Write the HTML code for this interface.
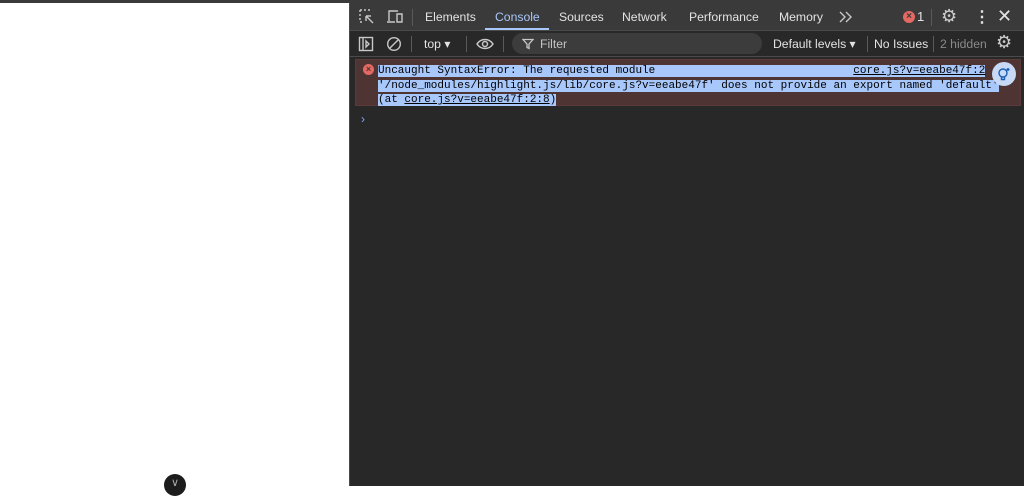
<!DOCTYPE html>
<html><head><style>
*{margin:0;padding:0;box-sizing:border-box}
body{width:1024px;height:486px;overflow:hidden;background:#fff;font-family:"Liberation Sans",sans-serif;position:relative}
.top{position:absolute;left:0;top:0;width:1024px;height:3px;background:#3a3a3a}
.dt{position:absolute;left:349px;top:3px;width:675px;height:483px;background:#282828;border-left:1px solid #4a4a4a}
.r1{position:absolute;left:0;top:0;width:675px;height:28px;background:#3a3a3a;border-bottom:1px solid #4a4a4a;color:#e3e3e3;font-size:12.2px}
.r2{position:absolute;left:0;top:28px;width:675px;height:26px;background:#282828;border-bottom:1px solid #4a4a4a;color:#e3e3e3;font-size:12.2px}
.a{position:absolute;white-space:nowrap}
.sep{position:absolute;width:1px;background:#5a5a5a}
.err{position:absolute;left:5px;top:56px;width:666px;height:47px;background:#4e3534;border:1px solid #5c3a3a}
.mono{font-family:"Liberation Mono",monospace;font-size:11px;line-height:14.5px;color:#000}
.sel{background:#a8c7fa}
u{text-decoration:underline}
</style></head><body>
<div class="top"></div>
<div class="dt">
 <div class="r1">
  <svg class="a" style="left:9px;top:6px" width="16" height="16" viewBox="0 0 16 16" fill="none" stroke="#c8c8c8" stroke-width="1.4"><path d="M1 1h2M5 1h2M9 1h2M1 1v2M1 5v2M1 9v2M1 13h2M7 7l7 7M7 7h5M7 7v5"/></svg>
  <svg class="a" style="left:36px;top:6px" width="18" height="16" viewBox="0 0 18 16" fill="none" stroke="#c8c8c8" stroke-width="1.4"><path d="M3 12V2h9M1 13h8M11 5h5v8h-5z"/></svg>
  <div class="sep" style="left:62px;top:6px;height:17px"></div>
  <span class="a" style="left:75px;top:7px">Elements</span>
  <span class="a" style="left:145px;top:7px;color:#a8c7fa">Console</span>
  <div class="a" style="left:135px;top:25px;width:64px;height:2px;background:#a8c7fa"></div>
  <span class="a" style="left:209px;top:7px">Sources</span>
  <span class="a" style="left:272px;top:7px">Network</span>
  <span class="a" style="left:339px;top:7px">Performance</span>
  <span class="a" style="left:429px;top:7px">Memory</span>
  <svg class="a" style="left:489px;top:8px" width="14" height="12" viewBox="0 0 14 12" fill="none" stroke="#c8c8c8" stroke-width="1.4"><path d="M1 1l5 5-5 5M7 1l5 5-5 5"/></svg>
  <div class="a" style="left:553px;top:8px;width:12px;height:12px;border-radius:50%;background:#e46962;color:#3a3a3a;font-size:10px;line-height:12px;text-align:center;font-weight:bold">×</div>
  <span class="a" style="left:567px;top:6px;font-size:13px">1</span>
  <div class="sep" style="left:581px;top:6px;height:17px"></div>
  <span class="a" style="left:591px;top:3px;font-size:18px;color:#ccc">⚙</span>
  <span class="a" style="left:624px;top:4px;font-size:16px;font-weight:bold">⋮</span>
  <span class="a" style="left:647px;top:3px;font-size:18px">✕</span>
 </div>
 <div class="r2">
  <svg class="a" style="left:8px;top:5px" width="16" height="16" viewBox="0 0 16 16" fill="none" stroke="#c8c8c8" stroke-width="1.4"><rect x="1.5" y="1.5" width="13" height="13"/><path d="M5 2v12M8 5l3 3-3 3z"/></svg>
  <svg class="a" style="left:36px;top:5px" width="16" height="16" viewBox="0 0 16 16" fill="none" stroke="#c8c8c8" stroke-width="1.4"><circle cx="8" cy="8" r="6.3"/><path d="M3.5 12.5l9-9"/></svg>
  <div class="sep" style="left:61px;top:5px;height:16px"></div>
  <span class="a" style="left:74px;top:6px">top ▾</span>
  <div class="sep" style="left:116px;top:5px;height:16px"></div>
  <svg class="a" style="left:126px;top:5px" width="18" height="16" viewBox="0 0 18 16" fill="none" stroke="#c8c8c8" stroke-width="1.5"><path d="M1 8c4-6 12-6 16 0c-4 6-12 6-16 0z"/><circle cx="9" cy="8" r="2.5"/></svg>
  <div class="sep" style="left:153px;top:5px;height:16px"></div>
  <div class="a" style="left:162px;top:2px;width:250px;height:21px;border-radius:11px;background:#3c3c3c"></div>
  <svg class="a" style="left:172px;top:7px" width="12" height="12" viewBox="0 0 12 12" fill="none" stroke="#c8c8c8" stroke-width="1.3"><path d="M1 1.5h10L7 6v4.5L5 9.5V6z"/></svg>
  <span class="a" style="left:190px;top:6px;color:#c4c4c4">Filter</span>
  <span class="a" style="left:423px;top:6px">Default levels ▾</span>
  <div class="sep" style="left:517px;top:5px;height:16px"></div>
  <span class="a" style="left:524px;top:6px">No Issues</span>
  <div class="sep" style="left:583px;top:5px;height:16px"></div>
  <span class="a" style="left:590px;top:6px;color:#8a8a8a">2 hidden</span>
  <span class="a" style="left:646px;top:1px;font-size:18px;color:#ccc">⚙</span>
 </div>
 <div class="err">
  <div class="a" style="left:7px;top:4px;width:11px;height:11px;border-radius:50%;background:#e46962;color:#4e3534;font-size:9px;line-height:11px;text-align:center;font-weight:bold">×</div>
  <div class="a mono" style="left:22px;top:4px"><span class="sel">Uncaught SyntaxError: The requested module&nbsp;&nbsp;&nbsp;&nbsp;&nbsp;&nbsp;&nbsp;&nbsp;&nbsp;&nbsp;&nbsp;&nbsp;&nbsp;&nbsp;&nbsp;&nbsp;&nbsp;&nbsp;&nbsp;&nbsp;&nbsp;&nbsp;&nbsp;&nbsp;&nbsp;&nbsp;&nbsp;&nbsp;&nbsp;&nbsp;<u>core.js?v=eeabe47f:2</u></span><br><span class="sel">'/node_modules/highlight.js/lib/core.js?v=eeabe47f' does not provide an export named 'default'</span><br><span class="sel">(at <u>core.js?v=eeabe47f:2:8</u>)</span></div>
  <div class="a" style="left:636px;top:2px;width:24px;height:24px;border-radius:50%;background:#c8d9f6"></div>
  <svg class="a" style="left:640px;top:6px" width="16" height="16" viewBox="0 0 16 16" fill="none" stroke="#1a5fb4" stroke-width="1.4"><circle cx="7" cy="7" r="4"/><path d="M5.5 11v2.5h3V11M12 2v3M10.5 3.5h3"/></svg>
 </div>
 <span class="a" style="left:11px;top:109px;color:#7cacf8;font-size:12px">›</span>
</div>
<div class="a" style="left:164px;top:474px;width:22px;height:22px;border-radius:50%;background:#1c1c1c;color:#aaa;font-size:11px;text-align:center;line-height:18px">∨</div>
</body></html>
